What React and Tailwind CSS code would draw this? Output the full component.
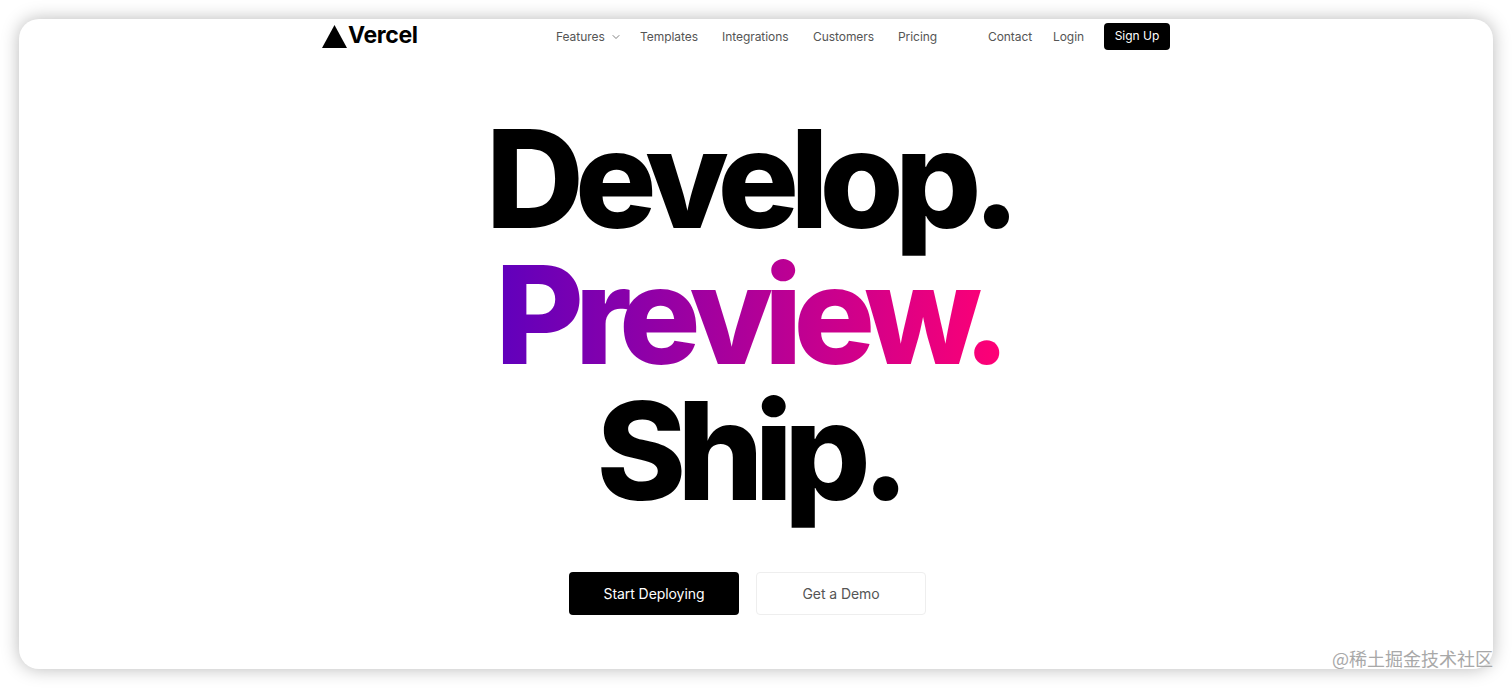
import { ChevronDown } from 'lucide-react'

const links = [
  { label: 'Templates', w: 'w-[82px]' },
  { label: 'Integrations', w: 'w-[91px]' },
  { label: 'Customers', w: 'w-[85px]' },
  { label: 'Pricing', w: 'w-[39px]' },
]

export default function App() {
  return (
    <div className="relative h-[688px] w-[1512px] overflow-hidden bg-white pt-[19px] pl-[19px] font-['Inter',sans-serif]">
      <div className="h-[650px] w-[1474px] rounded-[20px] bg-white shadow-[0_0_18px_rgba(0,0,0,0.28)]">
        {/* Nav */}
        <div className="flex h-[34px] items-center pl-[303px] pt-[1px]">
          <div className="flex w-[234px] items-center">
            <svg width="25" height="23" viewBox="0 0 25 23" className="-mt-[1px]">
              <polygon points="12.5,0 25,23 0,23" fill="#000" />
            </svg>
            <span className="ml-[1px] -mt-[3px] text-[23px] leading-none font-bold tracking-[-0.015em] text-black">Vercel</span>
          </div>
          <div className="flex w-[84px] items-center gap-[5px] text-[12px] tracking-[-0.005em] text-[#555]">
            Features
            <ChevronDown size={12} strokeWidth={1.5} />
          </div>
          {links.map((l) => (
            <span key={l.label} className={`text-[12px] tracking-[-0.005em] whitespace-nowrap text-[#555] ${l.w}`}>
              {l.label}
            </span>
          ))}
          <span className="ml-[51px] w-[65px] text-[12px] tracking-[-0.005em] text-[#555]">Contact</span>
          <span className="w-[51px] text-[12px] tracking-[-0.005em] text-[#555]">Login</span>
          <button className="-mt-[1px] h-[27px] w-[66px] rounded-[4px] bg-black text-[12px] text-white">Sign Up</button>
        </div>

        {/* Hero */}
        <div className="mt-[58px] flex flex-col items-center pr-[15px] text-[136px] leading-[136px] font-[830] tracking-[-0.0665em] text-black">
          <div>Develop.</div>
          <div className="bg-[linear-gradient(90deg,#5f00bd,#ff0075)] bg-clip-text text-transparent">Preview.</div>
          <div>Ship.</div>
        </div>

        {/* Actions */}
        <div className="mt-[53px] flex justify-center gap-[17px] pr-[17px]">
          <button className="h-[43px] w-[170px] rounded-[4px] bg-black text-[14px] tracking-[-0.005em] text-white">Start Deploying</button>
          <button className="h-[43px] w-[170px] rounded-[4px] border border-[#eee] bg-white text-[14px] tracking-[-0.005em] text-[#555]">Get a Demo</button>
        </div>
      </div>

      <span className="absolute right-[19px] bottom-[18px] font-['Noto_Sans_CJK_SC',sans-serif] text-[18px] leading-[24px] text-[#a8a8a8]">@稀土掘金技术社区</span>
    </div>
  )
}
